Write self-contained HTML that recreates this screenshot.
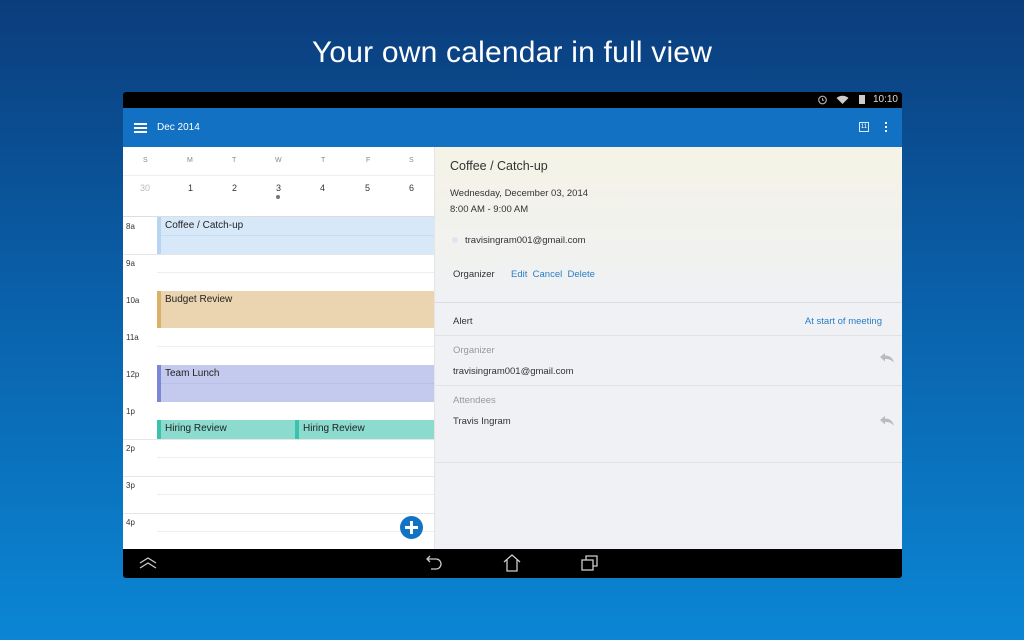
<!DOCTYPE html>
<html><head><meta charset="utf-8"><style>
*{margin:0;padding:0;box-sizing:border-box}
body{width:1024px;height:640px;overflow:hidden;font-family:"Liberation Sans",sans-serif;background:linear-gradient(180deg,#0b3d7c 0%,#0a5fa8 45%,#0b86d4 100%);position:relative}
.abs{position:absolute}
h1{position:absolute;left:0;width:1024px;top:36px;text-align:center;color:#fff;font-weight:normal;font-size:30px;letter-spacing:0.2px}
.dev{left:123px;top:92px;width:779px;height:486px;background:#000;border-radius:3px;overflow:hidden}
.t{position:absolute;white-space:nowrap}
.ev{position:absolute;font-size:10px;color:#222;padding:3px 0 0 4px}
.hr{position:absolute;left:3px;font-size:8px;color:#333}
.ln{position:absolute;height:1px}
</style></head><body>
<h1>Your own calendar in full view</h1>
<div class="abs dev">
 <div class="t" style="right:4px;top:2px;color:#ddd;font-size:10px">10:10</div>
 <div class="abs" style="left:736px;top:3px;width:6px;height:9px;background:#ccc"></div>
 <svg class="abs" style="left:713px;top:3px" width="13" height="10" viewBox="0 0 13 10"><path d="M6.5 9L0.5 3A9 9 0 0 1 12.5 3Z" fill="#ccc"/></svg>
 <svg class="abs" style="left:694px;top:2px" width="11" height="11"><circle cx="5.5" cy="6" r="3.8" fill="none" stroke="#aaa" stroke-width="1.2"/><path d="M5.5 4v2.2h1.6" stroke="#aaa" fill="none"/></svg>
 <div class="abs" style="left:0;top:16px;width:779px;height:39px;background:#1271c3"></div>
 <div class="abs" style="left:11px;top:31px;width:13px;height:2px;background:#fff;box-shadow:0 4px 0 #fff,0 8px 0 #fff"></div>
 <div class="t" style="left:34px;top:30px;color:#fff;font-size:10px">Dec 2014</div>
 <div class="abs" style="left:736px;top:30px;width:10px;height:10px;border:1px solid #dce9f7;color:#fff;font-size:6px;text-align:center;line-height:8px">11</div>
 <div class="abs" style="left:762px;top:30px;width:2px;height:2px;background:#fff;box-shadow:0 4px 0 #fff,0 8px 0 #fff"></div>
 <div class="abs" style="left:0;top:55px;width:311px;height:402px;background:#fff;overflow:hidden">
  <div class="ln" style="left:0;right:0;top:28px;background:#eee"></div>
  <div class="ln" style="left:0;right:0;top:69px;background:#ddd"></div>
 </div>
 <div style="position:absolute;left:0;top:0;font-size:7px;color:#888">
  <div class="t" style="left:20px;top:65px">S</div><div class="t" style="left:64px;top:65px">M</div><div class="t" style="left:109px;top:65px">T</div><div class="t" style="left:152px;top:65px">W</div><div class="t" style="left:198px;top:65px">T</div><div class="t" style="left:243px;top:65px">F</div><div class="t" style="left:286px;top:65px">S</div>
 </div>
 <div style="position:absolute;left:0;top:0;font-size:9px;color:#333">
  <div class="t" style="left:17px;top:91px;color:#bbb">30</div><div class="t" style="left:65px;top:91px">1</div><div class="t" style="left:109px;top:91px">2</div><div class="t" style="left:153px;top:91px">3</div><div class="t" style="left:197px;top:91px">4</div><div class="t" style="left:242px;top:91px">5</div><div class="t" style="left:286px;top:91px">6</div>
 </div>
 <div class="abs" style="left:153px;top:103px;width:4px;height:4px;border-radius:50%;background:#777"></div>
 <div class="hr" style="top:130px">8a</div><div class="hr" style="top:167px">9a</div><div class="hr" style="top:204px">10a</div><div class="hr" style="top:241px">11a</div><div class="hr" style="top:278px">12p</div><div class="hr" style="top:315px">1p</div><div class="hr" style="top:352px">2p</div><div class="hr" style="top:389px">3p</div><div class="hr" style="top:426px">4p</div>
 <div class="ln" style="left:0;width:311px;top:162px;background:#e6e6e6"></div>
 <div class="ln" style="left:34px;width:277px;top:180px;background:#eee"></div>
 <div class="ln" style="left:34px;width:277px;top:254px;background:#eee"></div>
 <div class="ln" style="left:0;width:311px;top:347px;background:#e6e6e6"></div>
 <div class="ln" style="left:34px;width:277px;top:365px;background:#eee"></div>
 <div class="ln" style="left:0;width:311px;top:384px;background:#e6e6e6"></div>
 <div class="ln" style="left:34px;width:277px;top:402px;background:#eee"></div>
 <div class="ln" style="left:0;width:311px;top:421px;background:#e6e6e6"></div>
 <div class="ln" style="left:34px;width:277px;top:439px;background:#eee"></div>
 <div class="ev" style="left:34px;top:125px;width:277px;height:37px;background:#d7e8f9;border-left:4px solid #b8d4f1">Coffee / Catch-up<div class="ln" style="left:0;right:0;top:18px;background:#c8dcf2"></div></div>
 <div class="ev" style="left:34px;top:199px;width:277px;height:37px;background:#ead5b0;border-left:4px solid #dbb168">Budget Review</div>
 <div class="ev" style="left:34px;top:273px;width:277px;height:37px;background:#c4caee;border-left:4px solid #7b86d6">Team Lunch<div class="ln" style="left:0;right:0;top:18px;background:#b8bfe8"></div></div>
 <div class="ev" style="left:34px;top:328px;width:138px;height:19px;background:#8bdccf;border-left:4px solid #3cc2ac">Hiring Review</div>
 <div class="ev" style="left:172px;top:328px;width:139px;height:19px;background:#8bdccf;border-left:4px solid #3cc2ac">Hiring Review</div>
 <div class="abs" style="left:277px;top:424px;width:23px;height:23px;border-radius:50%;background:#1272c4"></div>
 <div class="abs" style="left:282px;top:434px;width:13px;height:3px;background:#fff"></div>
 <div class="abs" style="left:287px;top:429px;width:3px;height:13px;background:#fff"></div>
 <div class="abs" style="left:311px;top:55px;width:468px;height:402px;background:#eff1f5;border-left:1px solid #e4e4e4">
  <div class="abs" style="left:0;top:0;width:467px;height:156px;background:linear-gradient(180deg,#f5f3e6,#eff1f4);border-bottom:1px solid #dadce0"></div>
  <div class="ln" style="left:0;width:467px;top:188px;background:#e0e2e6"></div>
  <div class="ln" style="left:0;width:467px;top:238px;background:#e0e2e6"></div>
  <div class="ln" style="left:0;width:467px;top:315px;background:#e0e2e6"></div>
  <div class="t" style="left:15px;top:12px;font-size:12.5px;color:#333">Coffee / Catch-up</div>
  <div class="t" style="left:15px;top:41px;font-size:9.5px;color:#333">Wednesday, December 03, 2014</div>
  <div class="t" style="left:15px;top:57px;font-size:9.5px;color:#333">8:00 AM - 9:00 AM</div>
  <div class="abs" style="left:17px;top:90px;width:6px;height:6px;border-radius:50%;background:#dde6f3"></div>
  <div class="t" style="left:30px;top:88px;font-size:9.5px;color:#333">travisingram001@gmail.com</div>
  <div class="t" style="left:18px;top:122px;font-size:9.5px;color:#333">Organizer</div>
  <div class="t" style="left:76px;top:122px;font-size:9.5px;color:#2a7ec6">Edit&nbsp; Cancel&nbsp; Delete</div>
  <div class="t" style="left:18px;top:169px;font-size:9.5px;color:#333">Alert</div>
  <div class="t" style="right:20px;top:169px;font-size:9.5px;color:#2a7ec6">At start of meeting</div>
  <div class="t" style="left:18px;top:198px;font-size:9.5px;color:#999">Organizer</div>
  <div class="t" style="left:18px;top:219px;font-size:9.5px;color:#333">travisingram001@gmail.com</div>
  <div class="t" style="left:18px;top:248px;font-size:9.5px;color:#999">Attendees</div>
  <div class="t" style="left:18px;top:269px;font-size:9.5px;color:#333">Travis Ingram</div>
  <svg class="abs" style="left:444px;top:205px" width="16" height="12"><path d="M1 5L6 1V3.5C11 3.5 14 6 15 11C13 8 10 7 6 7V9.5Z" fill="#bbb"/></svg>
  <svg class="abs" style="left:444px;top:268px" width="16" height="12"><path d="M1 5L6 1V3.5C11 3.5 14 6 15 11C13 8 10 7 6 7V9.5Z" fill="#bbb"/></svg>
 </div>
 <svg class="abs" style="left:16px;top:465px" width="18" height="12" fill="none" stroke="#ccc" stroke-width="1.2"><path d="M1 6L9 1L17 6M1 11L9 6L17 11"/></svg>
 <svg class="abs" style="left:302px;top:463px" width="18" height="16" fill="none" stroke="#ccc" stroke-width="1.3"><path d="M5 1L2 4L5 7M2 4H11A5 5 0 0 1 11 14H6"/></svg>
 <svg class="abs" style="left:380px;top:462px" width="18" height="18" fill="none" stroke="#ccc" stroke-width="1.3"><path d="M1 8L9 1L17 8M4 6V17H14V6"/></svg>
 <svg class="abs" style="left:458px;top:463px" width="18" height="16" fill="none" stroke="#ccc" stroke-width="1.3"><rect x="1" y="5" width="11" height="10"/><path d="M5 5V1H16V11H12"/></svg>
</div>
</body></html>
